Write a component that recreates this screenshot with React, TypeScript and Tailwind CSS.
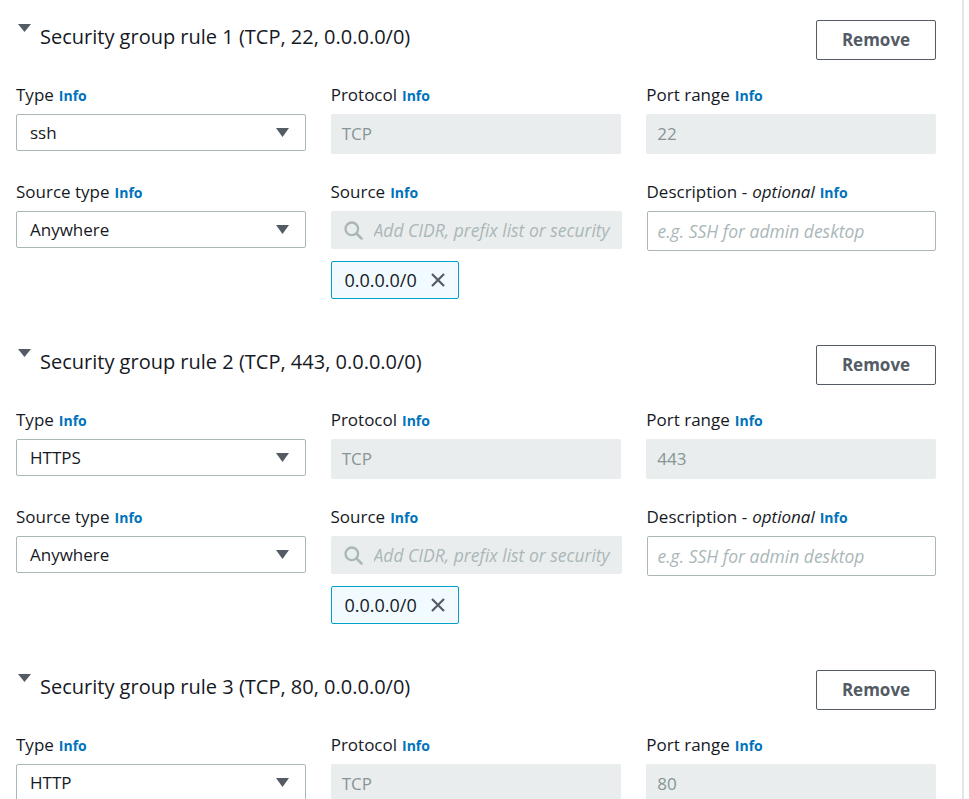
import React from "react";

const font = { fontFamily: '"Open Sans", "Noto Sans", Arial, sans-serif' };

function Info() {
  return <span className="ml-[5px] text-[14px] font-bold text-[#0073bb]">Info</span>;
}

function Caret() {
  return (
    <svg width="13" height="9" viewBox="0 0 13 9" className="shrink-0">
      <polygon points="0,0 13,0 6.5,9" fill="#545b64" />
    </svg>
  );
}

function Select({ value }: { value: string }) {
  return (
    <div className="flex h-[37px] items-center justify-between rounded-[2px] border border-[#aab7b8] bg-white pl-[13px] pr-[16px] text-[17px] text-[#16191f]">
      <span>{value}</span>
      <Caret />
    </div>
  );
}

function Disabled({ value }: { value: string }) {
  return (
    <div className="flex h-[40px] items-center rounded-[2px] bg-[#eaeded] px-[11px] text-[17px] text-[#879596]">
      {value}
    </div>
  );
}

function Label({ children }: { children: React.ReactNode }) {
  return <div className="flex h-[22px] items-center whitespace-nowrap text-[17px] text-[#16191f]">{children}</div>;
}

function Row({ a, b, c }: { a: React.ReactNode; b: React.ReactNode; c: React.ReactNode }) {
  return (
    <div className="flex">
      <div className="w-[290px]">{a}</div>
      <div className="ml-[25px] w-[291px]">{b}</div>
      <div className="ml-[25px] w-[290px]">{c}</div>
    </div>
  );
}

function Rule({ n, port, type }: { n: number; port: string; type: string }) {
  return (
    <div className="h-[325px] pt-[20px]">
      <div className="flex h-[40px] items-start justify-between">
        <div className="flex items-start pl-[2px]">
          <svg width="13" height="9" viewBox="0 0 13 9" className="mt-[4px]">
            <polygon points="0,0 13,0 6.5,8" fill="#545b64" />
          </svg>
          <span className="ml-[9px] mt-[3px] whitespace-nowrap text-[20px] leading-[28px] text-[#16191f]">
            Security group rule {n} (TCP, {port}, 0.0.0.0/0)
          </span>
        </div>
        <button className="h-[40px] w-[120px] rounded-[2px] border border-[#545b64] bg-white pb-[1px] text-[17px] font-bold text-[#545b64]">
          Remove
        </button>
      </div>
      <div className="mt-[24px]">
        <Row
          a={
            <>
              <Label>
                Type<Info />
              </Label>
              <div className="mt-[8px]">
                <Select value={type} />
              </div>
            </>
          }
          b={
            <>
              <Label>
                Protocol<Info />
              </Label>
              <div className="mt-[8px]">
                <Disabled value="TCP" />
              </div>
            </>
          }
          c={
            <>
              <Label>
                Port range<Info />
              </Label>
              <div className="mt-[8px]">
                <Disabled value={port} />
              </div>
            </>
          }
        />
      </div>
      <div className="mt-[27px]">
        <Row
          a={
            <>
              <Label>
                Source type<Info />
              </Label>
              <div className="mt-[8px]">
                <Select value="Anywhere" />
              </div>
            </>
          }
          b={
            <>
              <Label>
                Source<Info />
              </Label>
              <div className="mt-[8px] flex h-[38px] items-center rounded-[2px] bg-[#eaeded] pl-[13px] pr-[11px] text-[17.5px] italic text-[#aab7b8]">
                <svg width="19" height="19" viewBox="0 0 19 19" className="mr-[11px] shrink-0">
                  <circle cx="7.8" cy="7.8" r="6.3" fill="none" stroke="#aab7b8" strokeWidth="2.3" />
                  <line x1="12.5" y1="12.5" x2="17.5" y2="17.5" stroke="#aab7b8" strokeWidth="2.5" strokeLinecap="round" />
                </svg>
                <span className="min-w-0 flex-1 overflow-hidden whitespace-nowrap">
                  Add CIDR, prefix list or security group
                </span>
              </div>
              <div className="mt-[12px] flex h-[38px] w-[128px] items-center rounded-[2px] border border-[#00a1c9] bg-[#f1faff] pl-[13px] text-[18px] text-[#16191f]">
                <span>0.0.0.0/0</span>
                <svg width="16" height="16" viewBox="0 0 16 16" className="ml-[13px]">
                  <path d="M2 2 L14 14 M14 2 L2 14" stroke="#545b64" strokeWidth="2.2" />
                </svg>
              </div>
            </>
          }
          c={
            <>
              <Label>
                Description - <i className="ml-[5px]">optional</i>
                <Info />
              </Label>
              <div className="mt-[8px] flex h-[40px] items-center overflow-hidden whitespace-nowrap rounded-[2px] border border-[#aab7b8] bg-white px-[10px] text-[17.5px] italic text-[#aab7b8]">
                e.g. SSH for admin desktop
              </div>
            </>
          }
        />
      </div>
    </div>
  );
}

export default function App() {
  return (
    <div style={font} className="relative h-[799px] w-[969px] overflow-hidden bg-white">
      <div className="absolute right-[5px] top-0 h-full w-[2px] bg-[#e6e6e6]" />
      <div className="pl-[16px] pr-[33px]">
        <Rule n={1} port="22" type="ssh" />
        <Rule n={2} port="443" type="HTTPS" />
        <Rule n={3} port="80" type="HTTP" />
      </div>
    </div>
  );
}
